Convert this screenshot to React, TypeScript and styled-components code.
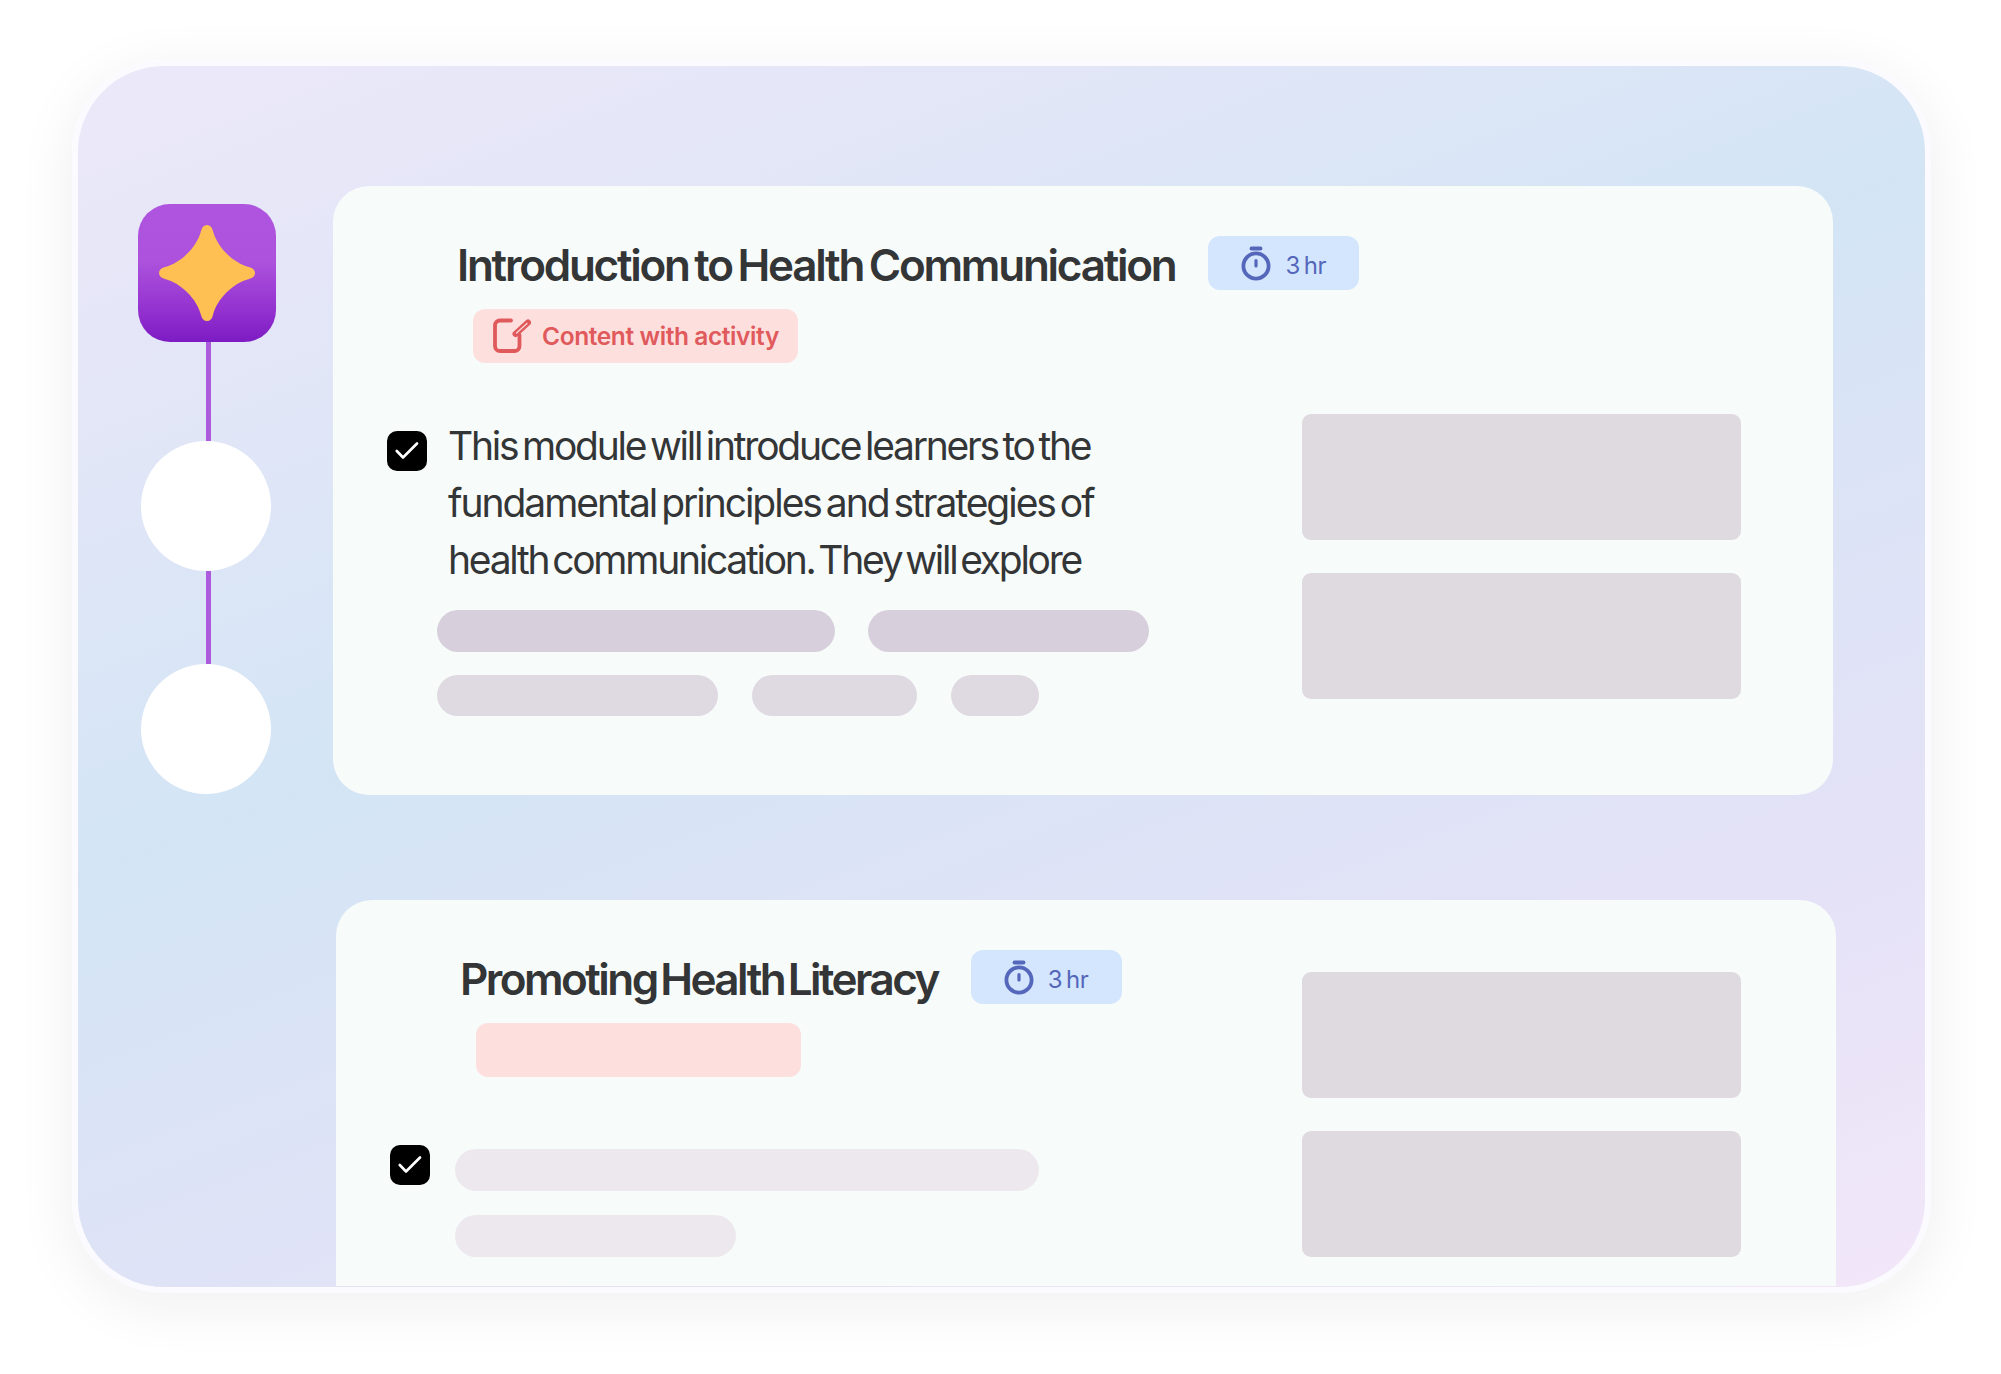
import React from "react";
import styled, { createGlobalStyle } from "styled-components";

const Global = createGlobalStyle`
  html, body { margin: 0; padding: 0; background: #fff; }
  body { font-family: Inter, "Liberation Sans", sans-serif; width: 2001px; height: 1374px; overflow: hidden; }
  * { box-sizing: border-box; }
`;

const Page = styled.div`
  width: 2001px;
  height: 1374px;
  padding: 60px 70px 81px 72px;
`;

const Frame = styled.div`
  width: 1859px;
  height: 1233px;
  border: 6px solid #fbfafe;
  border-radius: 92px;
  overflow: hidden;
  display: flex;
  padding: 120px 0 0 60px;
  background: linear-gradient(159deg, #ece8f9 0%, #e2e6f7 20%, #d3e5f5 42%, #dee3f6 62%, #e5e2f7 78%, #f2e7f9 100%);
  box-shadow: 0 12px 60px rgba(40, 30, 60, 0.07);
`;

const Rail = styled.div`
  width: 138px;
  margin-top: 18px;
  margin-right: 57px;
  display: flex;
  flex-direction: column;
  align-items: center;
  flex: none;
`;

const Tile = styled.div`
  width: 138px;
  height: 138px;
  border-radius: 32px;
  background: linear-gradient(180deg, #ae54df 0%, #ac52dd 42%, #9330cf 78%, #7d1bc4 100%);
  display: flex;
  align-items: center;
  justify-content: center;
`;

const Connector = styled.div<{ $h: number }>`
  width: 5px;
  height: ${(p) => p.$h}px;
  margin-left: 3px;
  background: #ab5bdc;
`;

const Dot = styled.div`
  width: 130px;
  height: 130px;
  margin-right: 2px;
  border-radius: 50%;
  background: #fff;
`;

const Column = styled.div`
  display: flex;
  flex-direction: column;
  gap: 105px;
  flex: none;
  width: 1503px;
`;

const Card = styled.div<{ $shift?: number; $fill?: boolean }>`
  width: 1500px;
  height: ${(p) => (p.$fill ? "386px" : "609px")};
  margin-left: ${(p) => p.$shift ?? 0}px;
  border-radius: ${(p) => (p.$fill ? "36px 36px 0 0" : "36px")};
  background: #f7fbfa;
  display: flex;
`;

const Main = styled.div<{ $w: number }>`
  width: ${(p) => p.$w}px;
  flex: none;
  padding-top: 50px;
`;

const Head = styled.div<{ $inset: number }>`
  display: flex;
  align-items: center;
  gap: 33px;
  height: 54px;
  padding-left: ${(p) => p.$inset}px;
`;

const Title = styled.h2<{ $ls: number; $ws: number }>`
  margin: 3px 0 0;
  font-size: 44px;
  font-weight: 600;
  letter-spacing: ${(p) => p.$ls}px;
  word-spacing: ${(p) => p.$ws}px;
  color: #333536;
  white-space: nowrap;
  line-height: 54px;
`;

const TimeChip = styled.div`
  width: 151px;
  height: 54px;
  padding-left: 33px;
  border-radius: 12px;
  background: #d3e6fd;
  color: #5567ba;
  font-size: 24px;
  letter-spacing: -0.4px;
  word-spacing: -2.5px;
  display: flex;
  align-items: center;
  gap: 14px;
  flex: none;
`;

const TimeText = styled.span`
  margin-top: 5px;
`;

const TypeChip = styled.div`
  width: 325px;
  height: 54px;
  margin: 19px 0 0 140px;
  padding-left: 20px;
  border-radius: 12px;
  background: #fddfde;
  color: #e05a5c;
  font-size: 24.5px;
  font-weight: 600;
  letter-spacing: -0.4px;
  display: flex;
  align-items: center;
  gap: 11px;
`;

const Row = styled.div<{ $top: number; $gap: number }>`
  display: flex;
  align-items: flex-start;
  gap: ${(p) => p.$gap}px;
  margin: ${(p) => p.$top}px 0 0 54px;
`;

const Check = styled.div<{ $top: number }>`
  width: 40px;
  height: 40px;
  border-radius: 10px;
  background: #000;
  margin-top: ${(p) => p.$top}px;
  display: flex;
  align-items: center;
  justify-content: center;
  flex: none;
`;

const Body = styled.div`
  font-size: 39px;
  font-weight: 400;
  line-height: 57px;
  color: #333536;
  white-space: nowrap;
`;

const Line = styled.div<{ $ls: number; $ws: number }>`
  letter-spacing: ${(p) => p.$ls}px;
  word-spacing: ${(p) => p.$ws}px;
`;

const PillRow = styled.div<{ $top: number; $gap: number }>`
  display: flex;
  gap: ${(p) => p.$gap}px;
  margin: ${(p) => p.$top}px 0 0 104px;
`;

const Pill = styled.div<{ $w: number; $h?: number; $c: string }>`
  width: ${(p) => p.$w}px;
  height: ${(p) => p.$h ?? 42}px;
  border-radius: 21px;
  background: ${(p) => p.$c};
`;

const PillStack = styled.div`
  display: flex;
  flex-direction: column;
  gap: 24px;
  margin-top: 4px;
`;

const Aside = styled.div<{ $top: number }>`
  width: 439px;
  padding-top: ${(p) => p.$top}px;
  display: flex;
  flex-direction: column;
  gap: 33px;
  flex: none;
`;

const Block = styled.div`
  height: 126px;
  border-radius: 9px;
  background: #dedae0;
`;

const Stopwatch = () => (
  <svg width="30" height="35" viewBox="0 0 30 35" fill="none" stroke="#5567ba" strokeLinecap="round">
    <path d="M10.5 2.5H19.5" strokeWidth="3.8" />
    <circle cx="15" cy="20" r="12.6" strokeWidth="3.8" />
    <path d="M15 14.5V20" strokeWidth="3.2" />
  </svg>
);

const NoteIcon = () => (
  <svg width="38" height="36" viewBox="0 0 38 36" fill="none">
    <path d="M18 2.5H7a5 5 0 0 0-5 5V28a5 5 0 0 0 5 5h14.5a5 5 0 0 0 5-5V17" stroke="#e05a5c" strokeWidth="3.8" strokeLinecap="round" />
    <path d="M22.5 16 35 4.5" stroke="#e05a5c" strokeWidth="6" strokeLinecap="round" />
    <path d="M23.5 15 34 5.5" stroke="#fddfde" strokeWidth="1.2" strokeLinecap="round" />
  </svg>
);

const Tick = () => (
  <svg width="24" height="20" viewBox="0 0 24 20" fill="none">
    <path d="M1.8 10 8 16.5 22 2.5" stroke="#fff" strokeWidth="2.6" strokeLinecap="round" strokeLinejoin="round" />
  </svg>
);

const Star = () => (
  <svg width="96" height="96" viewBox="0 0 96 96">
    <path
      fill="#fec053"
      d="M42 6C43 2 45 0 48 0C51 0 53 2 54 6C58 22 74 38 90 42C94 43 96 45 96 48C96 51 94 53 90 54C74 58 58 74 54 90C53 94 51 96 48 96C45 96 43 94 42 90C38 74 22 58 6 54C2 53 0 51 0 48C0 45 2 43 6 42C22 38 38 22 42 6Z"
    />
  </svg>
);

export default function App() {
  return (
    <Page>
      <Global />
      <Frame>
        <Rail>
          <Tile>
            <Star />
          </Tile>
          <Connector $h={99} />
          <Dot />
          <Connector $h={93} />
          <Dot />
        </Rail>
        <Column>
          <Card>
            <Main $w={969}>
              <Head $inset={124}>
                <Title $ls={-2.25} $ws={-3.2}>Introduction to Health Communication</Title>
                <TimeChip>
                  <Stopwatch />
                  <TimeText>3 hr</TimeText>
                </TimeChip>
              </Head>
              <TypeChip>
                <NoteIcon />
                Content with activity
              </TypeChip>
              <Row $top={54} $gap={21}>
                <Check $top={14}>
                  <Tick />
                </Check>
                <Body>
                  <Line $ls={-2.25} $ws={-4}>This module will introduce learners to the</Line>
                  <Line $ls={-2.03} $ws={-4}>fundamental principles and strategies of</Line>
                  <Line $ls={-2.25} $ws={-5}>health communication. They will explore</Line>
                </Body>
              </Row>
              <PillRow $top={22} $gap={33}>
                <Pill $w={398} $c="#d7d0dc" />
                <Pill $w={281} $c="#d7d0dc" />
              </PillRow>
              <PillRow $top={23} $gap={34}>
                <Pill $w={281} $h={41} $c="#dfdae2" />
                <Pill $w={165} $h={41} $c="#dfdae2" />
                <Pill $w={88} $h={41} $c="#dfdae2" />
              </PillRow>
            </Main>
            <Aside $top={228}>
              <Block />
              <Block />
            </Aside>
          </Card>
          <Card $shift={3} $fill>
            <Main $w={966}>
              <Head $inset={124}>
                <Title $ls={-2.55} $ws={-5}>Promoting Health Literacy</Title>
                <TimeChip>
                  <Stopwatch />
                  <TimeText>3 hr</TimeText>
                </TimeChip>
              </Head>
              <TypeChip />
              <Row $top={68} $gap={25}>
                <Check $top={0}>
                  <Tick />
                </Check>
                <PillStack>
                  <Pill $w={584} $c="#ece8ee" />
                  <Pill $w={281} $c="#ece8ee" />
                </PillStack>
              </Row>
            </Main>
            <Aside $top={72}>
              <Block />
              <Block />
            </Aside>
          </Card>
        </Column>
      </Frame>
    </Page>
  );
}
